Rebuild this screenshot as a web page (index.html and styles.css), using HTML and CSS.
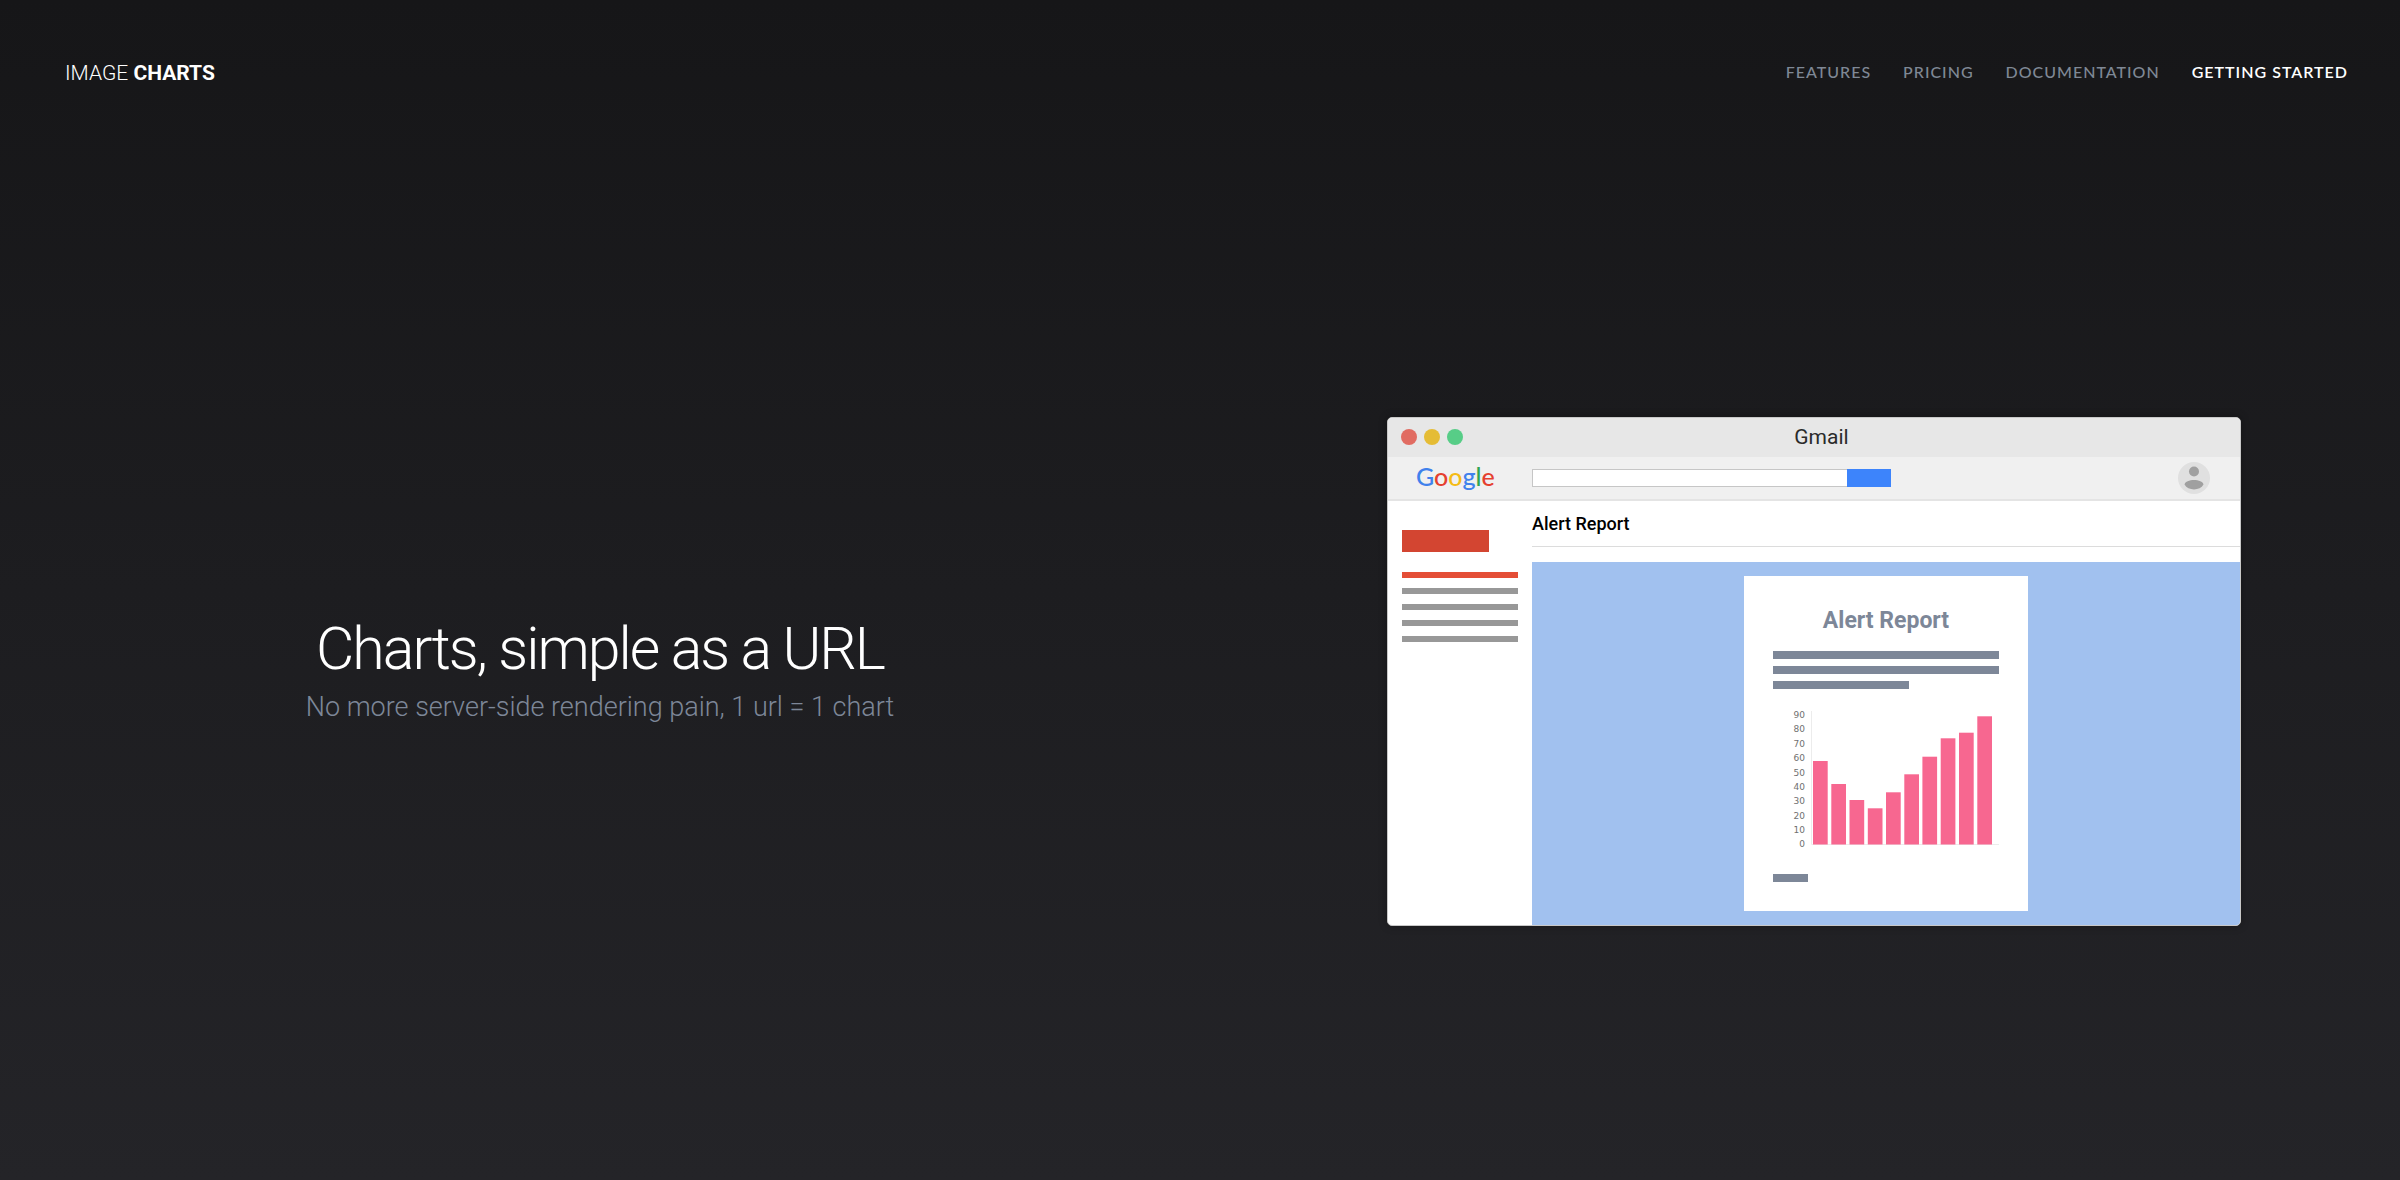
FILE: index.html
```html
<!DOCTYPE html>
<html lang="en">
<head>
<meta charset="utf-8">
<meta name="viewport" content="width=device-width, initial-scale=1">
<title>Image Charts</title>
<link rel="stylesheet" href="styles.css">
</head>
<body>
<header class="site-header">
  <a class="brand" href="#">IMAGE <strong>CHARTS</strong></a>
  <nav class="site-nav">
    <a href="#features">FEATURES</a>
    <a href="#pricing">PRICING</a>
    <a href="#documentation">DOCUMENTATION</a>
    <a class="active" href="#start">GETTING STARTED</a>
  </nav>
</header>
<main class="hero">
  <section class="pitch">
    <h1>Charts, simple as a URL</h1>
    <p>No more server-side rendering pain, 1 url = 1 chart</p>
  </section>
  <section class="demo">
    <div class="window">
      <div class="titlebar">
        <div class="dots"><i class="dot red"></i><i class="dot yellow"></i><i class="dot green"></i></div>
        <span class="window-title">Gmail</span>
      </div>
      <div class="toolbar">
        <div class="google"><span class="g-blue">G</span><span class="g-red">o</span><span class="g-yellow">o</span><span class="g-blue">g</span><span class="g-green">l</span><span class="g-red">e</span></div>
        <form class="search">
          <input type="text" aria-label="Search mail">
          <button type="button" aria-label="Search"></button>
        </form>
        <svg class="avatar" viewBox="0 0 32 32" aria-hidden="true">
          <circle cx="16" cy="16" r="16" fill="#e0e0e0"/>
          <circle cx="16" cy="9.500" r="5" fill="#a0a0a0"/>
          <path d="M6.500 22.500C7.500 16.500 24.500 16.500 25.500 22.500C22 29 10 29 6.500 22.500Z" fill="#a0a0a0"/>
        </svg>
      </div>
      <div class="mail">
        <aside class="sidebar">
          <button class="compose" type="button" aria-label="Compose"></button>
          <i class="folder current"></i>
          <i class="folder"></i>
          <i class="folder"></i>
          <i class="folder"></i>
          <i class="folder"></i>
        </aside>
        <div class="message">
          <h2 class="subject">Alert Report</h2>
          <div class="message-body">
            <article class="paper">
              <h3>Alert Report</h3>
              <i class="line"></i>
              <i class="line"></i>
              <i class="line short"></i>
              <svg class="chart" viewBox="0 0 226 160" role="img" aria-label="Bar chart">
                <path d="M38.500 11V144.500H226" fill="none" stroke="#ececec"/>
                <g class="axis">
                  <text x="32" y="18">90</text>
                  <text x="32" y="32">80</text>
                  <text x="32" y="47">70</text>
                  <text x="32" y="61">60</text>
                  <text x="32" y="76">50</text>
                  <text x="32" y="90">40</text>
                  <text x="32" y="104">30</text>
                  <text x="32" y="119">20</text>
                  <text x="32" y="133">10</text>
                  <text x="32" y="147">0</text>
                </g>
                <g fill="#f76790">
                  <rect x="40" y="61" width="14.700" height="83.500"/>
                  <rect x="58.300" y="84" width="14.700" height="60.500"/>
                  <rect x="76.500" y="100" width="14.700" height="44.500"/>
                  <rect x="94.800" y="108.300" width="14.700" height="36.200"/>
                  <rect x="113" y="92.300" width="14.700" height="52.200"/>
                  <rect x="131.300" y="74.300" width="14.700" height="70.200"/>
                  <rect x="149.400" y="56.700" width="14.700" height="87.800"/>
                  <rect x="167.700" y="38.300" width="14.700" height="106.200"/>
                  <rect x="186" y="32.700" width="14.700" height="111.800"/>
                  <rect x="204.300" y="16.300" width="14.700" height="128.200"/>
                </g>
              </svg>
              <i class="line signature"></i>
            </article>
          </div>
        </div>
      </div>
    </div>
  </section>
</main>
</body>
</html>
```
FILE: styles.css
```css
* { box-sizing: border-box; }

body {
  margin: 0;
  min-height: 100vh;
  display: flex;
  flex-direction: column;
  font-family: Roboto, "Liberation Sans", sans-serif;
  color: #fff;
  background: linear-gradient(#161618, #242428);
}

a { color: inherit; text-decoration: none; }
i { display: block; }

.site-header {
  display: flex;
  flex-wrap: wrap;
  justify-content: space-between;
  align-items: flex-start;
  gap: 16px;
  padding: 56px 52px 54px 65px;
}
.brand {
  font-size: 21px;
  line-height: 34px;
  font-weight: 300;
}
.brand strong { font-weight: 700; }

.site-nav {
  display: flex;
  flex-wrap: wrap;
  gap: 32px;
  font-family: Lato, sans-serif;
  font-size: 16px;
  line-height: 32px;
  font-weight: 500;
  letter-spacing: 1px;
  color: #7f8895;
}
.site-nav .active { color: #fff; font-weight: 600; }

.hero {
  flex: 1;
  display: grid;
  grid-template-columns: 1fr 1fr;
  align-items: center;
  padding: 40px 0 22px;
}
.pitch { text-align: center; }
.pitch h1 {
  margin: 0;
  font-size: 59px;
  line-height: 72px;
  font-weight: 300;
  letter-spacing: -2px;
}
.pitch p {
  margin: 0;
  font-size: 27px;
  line-height: 44px;
  font-weight: 300;
  color: #7d8798;
}

.demo { padding-left: 28px; }
.window {
  max-width: 854px;
  margin: 0 auto;
  overflow: hidden;
  border: 1px solid #c8c8c8;
  border-radius: 5px;
  background: #fff;
  color: #000;
  box-shadow: 0 0 8px rgba(0, 0, 0, 0.3);
}
.titlebar {
  display: grid;
  grid-template-columns: 80px 1fr 78px;
  align-items: center;
  height: 39px;
  padding-left: 13px;
  background: #e7e7e7;
}
.dots { display: flex; gap: 7px; }
.dot { width: 16px; height: 16px; border-radius: 50%; }
.red { background: #e16c62; }
.yellow { background: #e5bc35; }
.green { background: #57cd87; }
.window-title {
  text-align: center;
  font-size: 21px;
  line-height: 24px;
  color: #2b2b2b;
}

.toolbar {
  display: flex;
  align-items: center;
  height: 44px;
  padding-right: 30px;
  border-bottom: 2px solid #e4e4e4;
  background: #f0f0f0;
}
.google {
  flex: 0 0 144px;
  padding-left: 28px;
  font-family: Lato, sans-serif;
  font-size: 25px;
  line-height: 28px;
  padding-bottom: 4px;
  font-weight: 500;
}
.g-blue { color: #4081ec; }
.g-red { color: #e5402f; }
.g-yellow { color: #f5bb15; }
.g-green { color: #30a552; }
.search { display: flex; flex: 0 1 359px; }
.search input {
  flex: 1;
  min-width: 0;
  height: 18px;
  padding: 0 4px;
  border: 1px solid #c6c6c6;
  border-right: 0;
  border-radius: 0;
  background: #fff;
}
.search button {
  width: 44px;
  height: 18px;
  padding: 0;
  border: 0;
  background: #3d84fb;
}
.avatar { width: 32px; height: 32px; margin-left: auto; }

.mail { display: grid; grid-template-columns: 144px 1fr; }
.sidebar { padding: 29px 14px 0 14px; }
.compose {
  display: block;
  width: 87px;
  height: 22px;
  margin-bottom: 20px;
  padding: 0;
  border: 0;
  background: #d34531;
}
.folder { height: 6px; margin-bottom: 10px; background: #989898; }
.folder.current { background: #e44e36; }

.subject {
  margin: 0 0 15px;
  padding: 11px 0 10px;
  border-bottom: 1px solid #dcdcdc;
  font-size: 18px;
  line-height: 24px;
  font-weight: 500;
}
.message-body {
  padding: 14px;
  background: #a1c1ef;
}
.paper {
  display: flex;
  flex-direction: column;
  gap: 7px;
  max-width: 284px;
  margin: 0 auto;
  padding: 31px 29px 29px;
  background: #fff;
}
.paper h3 {
  margin: 0 0 9px;
  text-align: center;
  font-size: 23px;
  line-height: 28px;
  font-weight: 700;
  color: #7d8798;
}
.line { height: 8px; background: #7d8798; }
.short { width: 136px; }
.signature { width: 35px; }
.chart { width: 100%; margin: 4px 0 7px; }
.axis {
  font-family: "DejaVu Sans", sans-serif;
  font-size: 9px;
  text-anchor: end;
  fill: #707070;
}
```
